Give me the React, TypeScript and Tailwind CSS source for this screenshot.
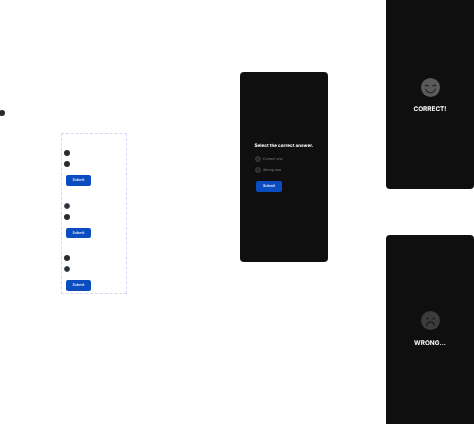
import React from 'react';

const font = { fontFamily: 'Inter, "Liberation Sans", sans-serif' };

function Dot({ ring }: { ring?: boolean }) {
  return (
    <div className={`w-[6px] h-[6px] rounded-full bg-[#2c2c30] ${ring ? 'border border-[#465260]' : ''}`} />
  );
}

function SubmitButton({ wide }: { wide?: boolean }) {
  return (
    <button
      className={`${wide ? 'w-[26px] h-[11px]' : 'w-[25px] h-[10.5px]'} rounded-[2px] bg-[#0b4cc0] text-[#e4ebfa] text-[3.6px] font-semibold flex items-center justify-center leading-none pt-[1.5px]`}
    >
      Submit
    </button>
  );
}

function Group({ ring }: { ring: 'first' | 'second' | 'none' }) {
  return (
    <div className="flex flex-col">
      <div className="flex flex-col gap-[5px]">
        <Dot ring={ring === 'first'} />
        <Dot ring={ring === 'second'} />
      </div>
      <div className="mt-[8px] ml-[2px]">
        <SubmitButton />
      </div>
    </div>
  );
}

function Smile() {
  return (
    <svg width="19" height="19" viewBox="0 0 24 24" fill="none">
      <circle cx="12" cy="12" r="12" fill="#5a5a5a" />
      <path d="M5.5 10.2c.7-1.6 2.8-1.6 3.5 0M15 10.2c.7-1.6 2.8-1.6 3.5 0" stroke="#222" strokeWidth="1.3" strokeLinecap="round" />
      <path d="M6 14c1.2 3.4 3.6 4.6 6 4.6s4.8-1.2 6-4.6" stroke="#222" strokeWidth="1.4" strokeLinecap="round" />
    </svg>
  );
}

function Frown() {
  return (
    <svg width="19" height="19" viewBox="0 0 24 24" fill="none">
      <circle cx="12" cy="12" r="12" fill="#3c3c3c" />
      <circle cx="8" cy="9.5" r="1.4" fill="#1c1c1c" />
      <circle cx="16" cy="9.5" r="1.4" fill="#1c1c1c" />
      <path d="M7 18c1-3 3-4.2 5-4.2s4 1.2 5 4.2" stroke="#1c1c1c" strokeWidth="1.5" strokeLinecap="round" />
    </svg>
  );
}

function ResultCard({ className, children, label, labelGap }: { className: string; children: React.ReactNode; label: string; labelGap: string }) {
  return (
    <div className={`absolute left-[386px] w-[88px] bg-[#0f0f0f] rounded-[4px] flex flex-col items-center ${className}`}>
      {children}
      <div className={`${labelGap} text-white text-[6.4px] font-bold leading-[9px]`}>
        {label}
      </div>
    </div>
  );
}

export default function App() {
  return (
    <div className="relative w-[474px] h-[424px] bg-white overflow-hidden [text-rendering:geometricPrecision] [will-change:transform]" style={font}>
      {/* stray radio on the canvas */}
      <div className="absolute left-[-1px] top-[110px] w-[6px] h-[6px] rounded-full bg-[#2c2c30]" />

      {/* component set */}
      <div className="absolute left-[61px] top-[133px] w-[66px] h-[161px] border border-dashed border-[#d8d6f6] pl-[2px] pt-[16px] flex flex-col gap-[17px]">
        <Group ring="none" />
        <Group ring="first" />
        <Group ring="second" />
      </div>

      {/* question card */}
      <div className="absolute left-[240px] top-[72px] w-[88px] h-[190px] bg-[#0f0f0f] rounded-[4px] pl-[14.5px] pt-[72px] flex flex-col">
        <div className="text-white text-[4.6px] font-bold leading-[6px] whitespace-nowrap">Select the correct answer.</div>
        <div className="mt-[6px] flex flex-col gap-[5px]">
          {['Correct one', 'Wrong one'].map(t => (
            <div key={t} className="flex items-center gap-[2.5px] h-[6px]">
              <div className="w-[6px] h-[6px] rounded-full bg-[#2a2a2a] border-[0.5px] border-[#3a3a3a]" />
              <span className="text-[#858585] text-[3.5px] leading-none whitespace-nowrap pt-[1.5px]">{t}</span>
            </div>
          ))}
        </div>
        <div className="mt-[8px] pl-[1.5px]">
          <SubmitButton wide />
        </div>
      </div>

      <ResultCard className="top-[-20px] h-[209px] pt-[97.5px]" label="CORRECT!" labelGap="mt-[8px]">
        <Smile />
      </ResultCard>
      <ResultCard className="top-[235px] h-[210px] pt-[75.5px]" label="WRONG..." labelGap="mt-[9px]">
        <Frown />
      </ResultCard>
    </div>
  );
}
